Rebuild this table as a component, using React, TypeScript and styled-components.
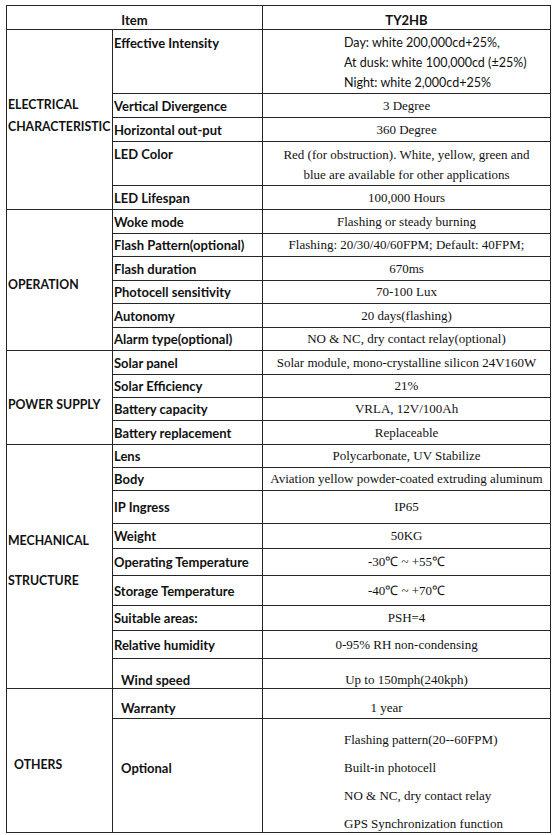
import React from "react";
import styled, { createGlobalStyle, css } from "styled-components";

const Global = createGlobalStyle`
  html, body { margin: 0; padding: 0; background: #ffffff; }
  body { width: 555px; height: 835px; overflow: hidden; }
`;

const Page = styled.div`
  padding: 5px 0 0 6px;
  background: #fff;
`;

const Table = styled.table`
  border-collapse: collapse;
  table-layout: fixed;
  width: 544px;
  color: #111;
`;

const Row = styled.tr<{ $h: number }>`
  height: ${(p) => p.$h}px;
`;

const cellBase = css`
  border: 1px solid #262626;
  padding: 0;
  line-height: 16px;
  white-space: nowrap;
  overflow: visible;
`;

const boldSans = css`
  font-family: Lato, "Open Sans", sans-serif;
  font-weight: 700;
  font-size: 13px;
`;

const HeadCell = styled.th`
  ${cellBase};
  ${boldSans};
  text-align: center;
  vertical-align: middle;
  padding-top: 5px;
`;

const SectionCell = styled.td<{ $top?: number; $bottom?: number; $indent?: number; $gap?: number }>`
  ${cellBase};
  ${boldSans};
  font-size: 12.3px;
  vertical-align: middle;
  padding: ${(p) => p.$top ?? 0}px 0 ${(p) => p.$bottom ?? 0}px ${(p) => p.$indent ?? 1}px;
  line-height: ${(p) => p.$gap ?? 22}px;
`;

const LabelCell = styled.td<{ $valign?: string; $top?: number; $bottom?: number; $indent?: number; $lh?: number }>`
  ${cellBase};
  ${boldSans};
  vertical-align: ${(p) => p.$valign ?? "middle"};
  padding: ${(p) => p.$top ?? 0}px 0 ${(p) => p.$bottom ?? 0}px ${(p) => p.$indent ?? 1}px;
  line-height: ${(p) => p.$lh ?? 16}px;
`;

const ValueCell = styled.td<{ $valign?: string; $top?: number; $bottom?: number; $left?: number; $right?: number; $align?: string; $lh?: number; $sans?: boolean }>`
  ${cellBase};
  font-family: ${(p) => (p.$sans ? 'Lato, "Open Sans", sans-serif' : '"Liberation Serif", "Times New Roman", serif')};
  font-size: ${(p) => (p.$sans ? 12.5 : 13)}px;
  text-align: ${(p) => p.$align ?? "center"};
  vertical-align: ${(p) => p.$valign ?? "middle"};
  padding: ${(p) => p.$top ?? 0}px ${(p) => p.$right ?? 0}px ${(p) => p.$bottom ?? 0}px ${(p) => p.$left ?? 0}px;
  line-height: ${(p) => p.$lh ?? 16}px;
`;

const Line = styled.div``;

const OptionList = styled.div`
  display: flex;
  flex-direction: column;
  gap: 12px;
  line-height: 16px;
`;

type Simple = { label: string; value: string; h: number };

const operation: Simple[] = [
  { label: "Woke mode", value: "Flashing or steady burning", h: 24 },
  { label: "Flash Pattern(optional)", value: "Flashing: 20/30/40/60FPM; Default: 40FPM;", h: 23 },
  { label: "Flash duration", value: "670ms", h: 24 },
  { label: "Photocell sensitivity", value: "70-100 Lux", h: 23 },
  { label: "Autonomy", value: "20 days(flashing)", h: 24 },
  { label: "Alarm type(optional)", value: "NO & NC, dry contact relay(optional)", h: 23 },
];

const power: Simple[] = [
  { label: "Solar panel", value: "Solar module, mono-crystalline silicon 24V160W", h: 24 },
  { label: "Solar Efficiency", value: "21%", h: 23 },
  { label: "Battery capacity", value: "VRLA, 12V/100Ah", h: 23 },
  { label: "Battery replacement", value: "Replaceable", h: 24 },
];

const mechanical: Simple[] = [
  { label: "Lens", value: "Polycarbonate, UV Stabilize", h: 23 },
  { label: "Body", value: "Aviation yellow powder-coated extruding aluminum", h: 23 },
  { label: "IP Ingress", value: "IP65", h: 33 },
  { label: "Weight", value: "50KG", h: 25 },
  { label: "Operating Temperature", value: "-30\u2103 ~ +55\u2103", h: 27 },
  { label: "Storage Temperature", value: "-40\u2103 ~ +70\u2103", h: 30 },
  { label: "Suitable areas:", value: "PSH=4", h: 25 },
  { label: "Relative humidity", value: "0-95% RH non-condensing", h: 28 },
];

export default function App() {
  return (
    <Page>
      <Global />
      <Table>
        <colgroup>
          <col style={{ width: 106 }} />
          <col style={{ width: 150 }} />
          <col style={{ width: 288 }} />
        </colgroup>
        <tbody>
          <Row $h={24}>
            <HeadCell colSpan={2}>Item</HeadCell>
            <HeadCell>TY2HB</HeadCell>
          </Row>

          {/* ELECTRICAL */}
          <Row $h={64}>
            <SectionCell rowSpan={5} $bottom={7}>
              ELECTRICAL
              <br />
              CHARACTERISTIC
            </SectionCell>
            <LabelCell $valign="top" $top={3} $lh={20}>Effective Intensity</LabelCell>
            <ValueCell $sans $align="left" $valign="top" $top={3} $left={81} $lh={20}>
              <Line>Day: white 200,000cd+25%,</Line>
              <Line>At dusk: white 100,000cd (&plusmn;25%)</Line>
              <Line>Night: white 2,000cd+25%</Line>
            </ValueCell>
          </Row>
          <Row $h={24}>
            <LabelCell>Vertical Divergence</LabelCell>
            <ValueCell>3 Degree</ValueCell>
          </Row>
          <Row $h={24}>
            <LabelCell>Horizontal out-put</LabelCell>
            <ValueCell>360 Degree</ValueCell>
          </Row>
          <Row $h={43}>
            <LabelCell $valign="top" $top={3} $lh={19}>LED Color</LabelCell>
            <ValueCell $valign="top" $top={3} $lh={20}>
              <Line>Red (for obstruction). White, yellow, green and</Line>
              <Line>blue are available for other applications</Line>
            </ValueCell>
          </Row>
          <Row $h={24}>
            <LabelCell>LED Lifespan</LabelCell>
            <ValueCell>100,000 Hours</ValueCell>
          </Row>

          {/* OPERATION */}
          {operation.map((r, i) => (
            <Row key={r.label} $h={r.h}>
              {i === 0 && (
                <SectionCell rowSpan={operation.length} $top={9}>
                  OPERATION
                </SectionCell>
              )}
              <LabelCell>{r.label}</LabelCell>
              <ValueCell>{r.value}</ValueCell>
            </Row>
          ))}

          {/* POWER SUPPLY */}
          {power.map((r, i) => (
            <Row key={r.label} $h={r.h}>
              {i === 0 && (
                <SectionCell rowSpan={power.length} $top={14}>
                  POWER SUPPLY
                </SectionCell>
              )}
              <LabelCell>{r.label}</LabelCell>
              <ValueCell>{r.value}</ValueCell>
            </Row>
          ))}

          {/* MECHANICAL */}
          {mechanical.map((r, i) => (
            <Row key={r.label} $h={r.h}>
              {i === 0 && (
                <SectionCell rowSpan={mechanical.length + 1} $bottom={12} $gap={40}>
                  MECHANICAL
                  <br />
                  STRUCTURE
                </SectionCell>
              )}
              <LabelCell>{r.label}</LabelCell>
              <ValueCell>{r.value}</ValueCell>
            </Row>
          ))}
          <Row $h={30}>
            <LabelCell $top={12} $indent={8}>Wind speed</LabelCell>
            <ValueCell $top={12}>Up to 150mph(240kph)</ValueCell>
          </Row>

          {/* OTHERS */}
          <Row $h={30}>
            <SectionCell rowSpan={2} $top={8} $indent={7}>
              OTHERS
            </SectionCell>
            <LabelCell $top={9} $indent={8}>Warranty</LabelCell>
            <ValueCell $top={9} $right={40}>1 year</ValueCell>
          </Row>
          <Row $h={113}>
            <LabelCell $bottom={16} $indent={8}>Optional</LabelCell>
            <ValueCell $align="left" $valign="top" $top={13} $left={81}>
              <OptionList>
                <Line>Flashing pattern(20--60FPM)</Line>
                <Line>Built-in photocell</Line>
                <Line>NO &amp; NC, dry contact relay</Line>
                <Line>GPS Synchronization function</Line>
              </OptionList>
            </ValueCell>
          </Row>
        </tbody>
      </Table>
    </Page>
  );
}
